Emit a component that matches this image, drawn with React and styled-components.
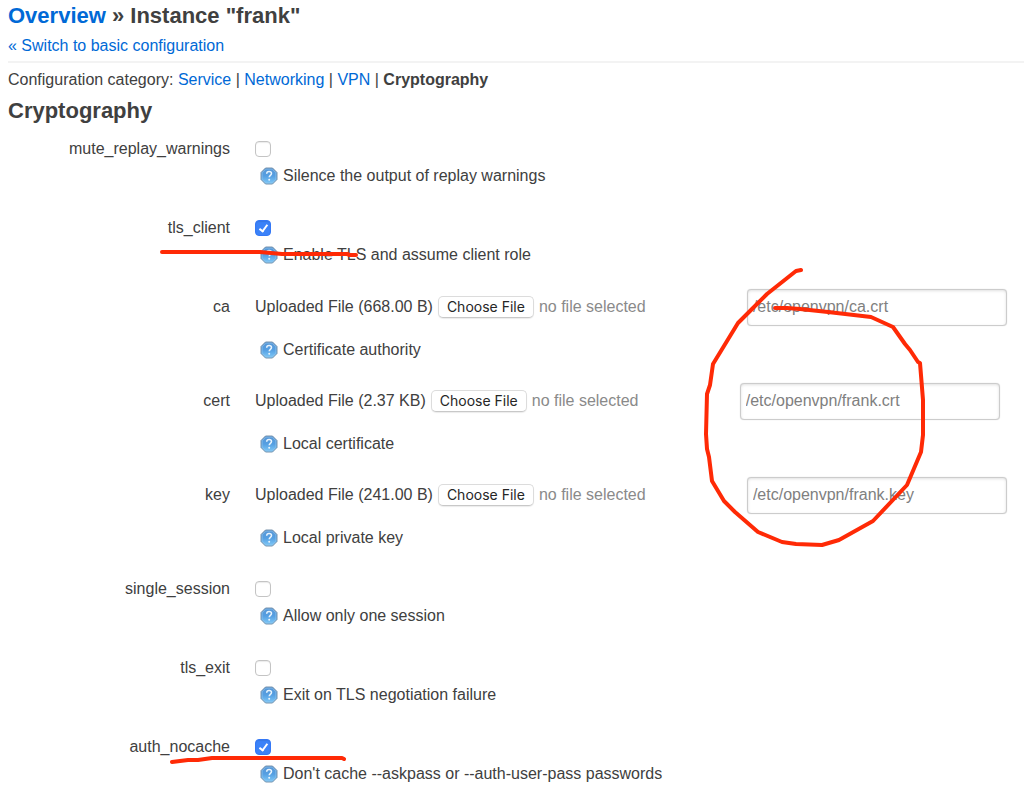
import { useRef, useState } from "react";
import styled, { createGlobalStyle } from "styled-components";

const GlobalStyle = createGlobalStyle`
  body {
    margin: 0;
    background: #fff;
    color: #404040;
    font-family: "Liberation Sans", Helvetica, Arial, sans-serif;
    font-size: 16px;
    line-height: 24px;
  }
`;

const Page = styled.main`
  position: relative;
  padding-left: 8px;
`;

const Title = styled.h2`
  margin: 0;
  font-size: 22px;
  line-height: 32px;
`;

const SectionTitle = styled.h3`
  margin: 3px 0;
  font-size: 22px;
  line-height: 32px;
`;

const Link = styled.a`
  color: #0069d6;
  text-decoration: none;

  &:hover {
    text-decoration: underline;
  }
`;

const SwitchLine = styled.div`
  padding: 2px 0 3px;
  border-bottom: 2px solid #f3f3f3;
`;

const Categories = styled.nav`
  padding-top: 5px;
`;

const Row = styled.div`
  display: grid;
  grid-template-columns: 222px 1fr;
  column-gap: 25px;
  padding: ${(props) => (props.$file ? "0 0 20px" : "7px 0 21px")};

  &:last-child {
    padding-bottom: 0;
  }
`;

const Label = styled.label`
  text-align: right;
  line-height: ${(props) => (props.$file ? "38px" : "24px")};
`;

const Control = styled.div`
  display: flex;
  align-items: center;
  height: ${(props) => (props.$file ? "38px" : "24px")};
  white-space: nowrap;
`;

const Checkbox = styled.input`
  appearance: none;
  display: grid;
  place-items: center;
  box-sizing: border-box;
  width: 16px;
  height: 16px;
  margin: 0;
  border: 1px solid #c4c4c4;
  border-radius: 4px;
  background: #fff;
  box-shadow: inset 0 1px 1px #00000014;

  &:checked {
    border-color: #3478f6;
    background: #3b82f8;
  }

  &:checked::after {
    content: "";
    width: 3px;
    height: 7px;
    margin-bottom: 2px;
    border: solid #fff;
    border-width: 0 2px 2px 0;
    transform: rotate(36deg);
  }
`;

const Hint = styled.div`
  display: flex;
  align-items: center;
  gap: 5px;
  margin-top: ${(props) => (props.$file ? "12px" : "3px")};
  padding-left: 5px;
`;

const Picker = styled.div`
  display: flex;
  align-items: center;
  gap: 5px;
  width: 304px;
  margin: 0 5px;
  color: #8a8a8a;
`;

const PickButton = styled.button`
  height: 22px;
  padding: 0 8px;
  border: 1px solid #dcdcdc;
  border-bottom-color: #c8c8c8;
  border-radius: 5px;
  background: #fff;
  box-shadow: 0 1px 1px #00000014;
  color: #262626;
  font-family: Inter, sans-serif;
  font-size: 14px;
  line-height: 20px;
`;

const PathInput = styled.input`
  box-sizing: border-box;
  width: 260px;
  height: 37px;
  padding: 0 5px;
  border: 1px solid #ccc;
  border-radius: 4px;
  box-shadow: inset 0 1px 3px #0000001f, 0 0 1px #00000033;
  color: #808080;
  font: inherit;
`;

const Marks = styled.svg`
  position: absolute;
  top: 0;
  left: 0;
  pointer-events: none;
  fill: none;
  stroke: #ff2a06;
  stroke-width: 4;
  stroke-linecap: round;
  stroke-linejoin: round;
`;

function HelpIcon() {
  return (
    <svg width="18" height="18" viewBox="0 0 18 18" aria-hidden="true">
      <defs>
        <linearGradient id="help" x1="0" y1="0" x2="0" y2="1">
          <stop offset="0" stopColor="#5795d4" />
          <stop offset="0.5" stopColor="#559fe2" />
          <stop offset="1" stopColor="#80caf8" />
        </linearGradient>
      </defs>
      <path
        d="M5.5 1h7L17 5.5v7L12.500 17h-7L1 12.500v-7z"
        fill="url(#help)"
        stroke="#7892ab"
        strokeWidth="1"
        strokeLinejoin="round"
      />
      <path
        d="M5.900 2.200h6.200l3.700 3.700v6.200l-3.700 3.700H5.900l-3.700-3.700V5.900z"
        fill="none"
        stroke="#8fc5ef"
        strokeWidth="0.600"
      />
      <path
        d="M6.700 6.800c0-1.500 1-2.200 2.400-2.200s2.400.8 2.400 2c0 1.700-2.300 1.800-2.300 3.700"
        fill="none"
        stroke="#e8f4fd"
        strokeWidth="1.500"
      />
      <circle cx="9.200" cy="12.800" r="1" fill="#e8f4fd" />
    </svg>
  );
}

function CheckRow({ name, hint, checked }) {
  return (
    <Row>
      <Label htmlFor={name}>{name}</Label>
      <div>
        <Control>
          <Checkbox type="checkbox" id={name} defaultChecked={checked} />
        </Control>
        <Hint>
          <HelpIcon />
          {hint}
        </Hint>
      </div>
    </Row>
  );
}

function FileRow({ name, hint, size, path }) {
  const fileRef = useRef(null);
  const [fileName, setFileName] = useState("no file selected");

  const handleChange = (e) => {
    const file = e.target.files[0];
    setFileName(file ? file.name : "no file selected");
  };

  return (
    <Row $file>
      <Label $file htmlFor={name}>
        {name}
      </Label>
      <div>
        <Control $file>
          <span>Uploaded File ({size})</span>
          <Picker>
            <input type="file" hidden ref={fileRef} onChange={handleChange} />
            <PickButton type="button" onClick={() => fileRef.current.click()}>
              Choose File
            </PickButton>
            <span>{fileName}</span>
          </Picker>
          <PathInput type="text" id={name} defaultValue={path} />
        </Control>
        <Hint $file>
          <HelpIcon />
          {hint}
        </Hint>
      </div>
    </Row>
  );
}

function App() {
  return (
    <Page>
      <GlobalStyle />
      <Title>
        <Link href="#overview">Overview</Link> » Instance "frank"
      </Title>
      <SwitchLine>
        <Link href="#basic">« Switch to basic configuration</Link>
      </SwitchLine>
      <Categories>
        Configuration category: <Link href="#service">Service</Link> |{" "}
        <Link href="#networking">Networking</Link> | <Link href="#vpn">VPN</Link> |{" "}
        <strong>Cryptography</strong>
      </Categories>
      <SectionTitle>Cryptography</SectionTitle>

      <form>
        <CheckRow name="mute_replay_warnings" hint="Silence the output of replay warnings" />
        <CheckRow name="tls_client" hint="Enable TLS and assume client role" checked />
        <FileRow name="ca" hint="Certificate authority" size="668.00 B" path="/etc/openvpn/ca.crt" />
        <FileRow name="cert" hint="Local certificate" size="2.37 KB" path="/etc/openvpn/frank.crt" />
        <FileRow name="key" hint="Local private key" size="241.00 B" path="/etc/openvpn/frank.key" />
        <CheckRow name="single_session" hint="Allow only one session" />
        <CheckRow name="tls_exit" hint="Exit on TLS negotiation failure" />
        <CheckRow
          name="auth_nocache"
          hint="Don't cache --askpass or --auth-user-pass passwords"
          checked
        />
      </form>

      <Marks width="940" height="780" aria-hidden="true">
        <path d="M162 252H260L282 254H347L350 255H356" />
        <path d="M172 762L188 760H198L212 758H342L344 759" />
        <path d="M801 270L796 271L767 294L752 309L738 323L713 364L710 385L707 394L706 434L707 449L709 457L712 481L724 501L735 512L758 532L782 542L796 544L822 545L839 540L873 521L907 485L921 452L923 435V400L920 363L918 362L910 350L905 344L893 327L871 317L828 312L800 309L787 308H775" />
      </Marks>
    </Page>
  );
}

export default App;
